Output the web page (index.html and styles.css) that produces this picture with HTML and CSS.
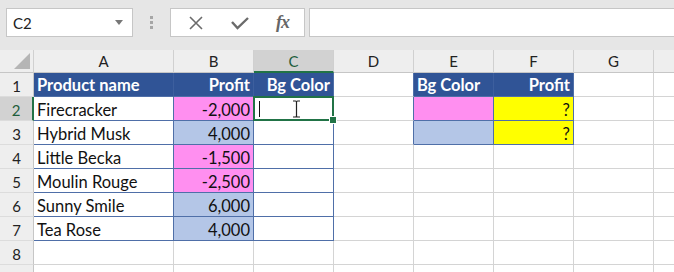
FILE: index.html
```
<!DOCTYPE html>
<html lang="en">
<head>
    <meta charset="UTF-8">
    <title>Bg Color</title>
    <link rel="stylesheet" href="styles.css">
</head>
<body>
    <div class="ribbon">
        <div class="namebox">
            <span>C2</span>
            <svg class="drop" width="8" height="5" viewBox="0 0 8 5"><path d="M0 0H8L4 5Z" fill="#777"/></svg>
        </div>
        <div class="grip"><i></i><i></i><i></i></div>
        <div class="fx-buttons">
            <svg width="14" height="14" viewBox="0 0 14 14"><path d="M1 1L13 13M13 1L1 13" stroke="#6b6b6b" stroke-width="1.6" fill="none"/></svg>
            <svg width="18" height="14" viewBox="0 0 18 14"><path d="M1 6L6.5 12L17 2" stroke="#6b6b6b" stroke-width="2.4" fill="none"/></svg>
            <span class="fx">fx</span>
        </div>
        <div class="formula"></div>
    </div>

    <table class="sheet">
        <colgroup>
            <col style="width:34px"><col style="width:140px"><col style="width:80px"><col style="width:80px">
            <col style="width:80px"><col style="width:80px"><col style="width:80px"><col style="width:80px"><col style="width:80px">
        </colgroup>
        <tr class="colhead">
            <td class="corner"><span class="tri"></span></td>
            <td>A</td><td>B</td><td class="sel">C</td><td>D</td><td>E</td><td>F</td><td>G</td><td></td>
        </tr>
        <tr>
            <td class="rh">1</td>
            <td class="th tb">Product name</td><td class="th tb num">Profit</td><td class="th tb tr num">Bg Color</td>
            <td class="to-e"></td>
            <td class="th tb">Bg Color</td><td class="th tb tr num">Profit</td><td></td><td></td>
        </tr>
        <tr>
            <td class="rh sel">2</td>
            <td class="tb">Firecracker</td><td class="tb num pink">-2,000</td>
            <td class="tb tr active">
                <span class="caret"></span>
                <svg class="ibeam" width="9" height="18" viewBox="0 0 9 18"><path d="M1 1H3.5Q4.5 1 4.5 2V16Q4.5 17 3.5 17H1M8 1H5.5Q4.5 1 4.5 2M4.5 16Q4.5 17 5.5 17H8" stroke="#222" stroke-width="1.2" fill="none"/></svg>
                <span class="handle"></span>
            </td>
            <td class="to-e"></td>
            <td class="tb pink"></td><td class="tb tr num yellow">?</td><td></td><td></td>
        </tr>
        <tr>
            <td class="rh">3</td>
            <td class="tb">Hybrid Musk</td><td class="tb num blue">4,000</td><td class="tb tr"></td>
            <td class="to-e"></td>
            <td class="tb blue tbot"></td><td class="tb tr num yellow tbot">?</td><td></td><td></td>
        </tr>
        <tr>
            <td class="rh">4</td>
            <td class="tb">Little Becka</td><td class="tb num pink">-1,500</td><td class="tb tr"></td>
            <td></td><td></td><td></td><td></td><td></td>
        </tr>
        <tr>
            <td class="rh">5</td>
            <td class="tb">Moulin Rouge</td><td class="tb num pink">-2,500</td><td class="tb tr"></td>
            <td></td><td></td><td></td><td></td><td></td>
        </tr>
        <tr>
            <td class="rh">6</td>
            <td class="tb">Sunny Smile</td><td class="tb num blue">6,000</td><td class="tb tr"></td>
            <td></td><td></td><td></td><td></td><td></td>
        </tr>
        <tr>
            <td class="rh">7</td>
            <td class="tb tbot">Tea Rose</td><td class="tb num blue tbot">4,000</td><td class="tb tr tbot"></td>
            <td></td><td></td><td></td><td></td><td></td>
        </tr>
        <tr>
            <td class="rh">8</td>
            <td></td><td></td><td></td><td></td><td></td><td></td><td></td><td></td>
        </tr>
        <tr>
            <td class="rh"></td>
            <td></td><td></td><td></td><td></td><td></td><td></td><td></td><td></td>
        </tr>
    </table>
</body>
</html>
```

FILE: styles.css
```
html,
body{
    margin:0;
    padding:0;
    background:#e6e6e6;
    overflow:hidden;
    font-family:Lato,"Noto Sans",sans-serif;
}
.ribbon{
    display:flex;
    align-items:center;
    height:50px;
    padding-bottom:5px;
    box-sizing:border-box;
}
.namebox,
.fx-buttons,
.formula{
    height:29px;
    box-sizing:border-box;
    background:#fff;
    border:1px solid #c6c6c6;
}
.namebox{
    display:flex;
    align-items:center;
    justify-content:space-between;
    width:127px;
    margin-left:6px;
    padding:0 9px 0 6px;
    font-size:15px;
    color:#222;
}
.grip{
    display:flex;
    flex-direction:column;
    gap:2px;
    margin:0 17px 0 17px;
}
.grip i{
    width:3px;
    height:3px;
    background:#a6a6a6;
}
.fx-buttons{
    display:flex;
    align-items:center;
    width:135px;
    padding-left:18px;
}
.fx-buttons svg:first-child{
    margin-right:28px;
}
.fx-buttons svg:nth-child(2){
    margin-right:27px;
}
.fx{
    font-family:"Liberation Serif",serif;
    font-style:italic;
    font-weight:bold;
    font-size:18px;
    color:#666;
    letter-spacing:-1px;
}
.formula{
    flex:1;
    margin-left:4px;
    border-right:none;
}

/* sheet */
.sheet{
    table-layout:fixed;
    width:734px;
    border-collapse:separate;
    border-spacing:0;
    background:#fff;
    font-size:16.5px;
    color:#111;
}
.sheet td{
    box-sizing:border-box;
    height:24px;
    padding:2px 3px 0;
    line-height:20px;
    border-right:1px solid #d4d4d4;
    border-bottom:1px solid #d4d4d4;
    white-space:nowrap;
    overflow:hidden;
    position:relative;
}
.colhead td{
    height:23px;
    padding-top:0;
    background:#eeeeee;
    text-align:center;
    font-size:15px;
    color:#222;
    border-right:1px solid #d0d0d0;
    border-bottom:1px solid #c6c6c6;
}
.colhead td.sel{
    background:#d2d2d2;
    color:#1e5e3c;
    border-bottom:2px solid #217346;
}
.tri{
    position:absolute;
    right:3px;
    bottom:3px;
    width:0;
    height:0;
    border-left:16px solid transparent;
    border-bottom:16px solid #b5b5b5;
}
.sheet td.rh{
    background:#eeeeee;
    text-align:center;
    font-size:15px;
    color:#222;
    border-right:1px solid #c6c6c6;
    border-bottom:1px solid #dcdcdc;
}
.sheet td.rh.sel{
    background:#d2d2d2;
    color:#1e5e3c;
    border-right:2px solid #217346;
}
.num{
    text-align:right;
}
.sheet td.tb{
    border-bottom-color:#4f6fa8;
    border-right-color:#4f6fa8;
}
.sheet td.th{
    padding-top:1px;
    background:#305496;
    color:#fff;
    font-weight:bold;
    border-right-color:#3d5f9e;
}
.sheet td.th.tr{
    border-right-color:#4f6fa8;
}
.sheet td.to-e{
    border-right-color:#4f6fa8;
}
.pink{
    background:#ff8ff0;
}
.blue{
    background:#b4c6e7;
}
.yellow{
    background:#ffff00;
}

/* active cell */
.sheet td.active{
    overflow:visible;
}
.active:after{
    content:"";
    position:absolute;
    left:-1px;
    top:-1px;
    right:-1px;
    bottom:-1px;
    border:2px solid #217346;
}
.caret{
    position:absolute;
    left:5px;
    top:4px;
    width:1px;
    height:16px;
    background:#111;
}
.ibeam{
    position:absolute;
    left:38px;
    top:3px;
}
.handle{
    position:absolute;
    right:-4px;
    bottom:-4px;
    width:6px;
    height:6px;
    background:#217346;
    border:1px solid #fff;
    z-index:2;
}
```
